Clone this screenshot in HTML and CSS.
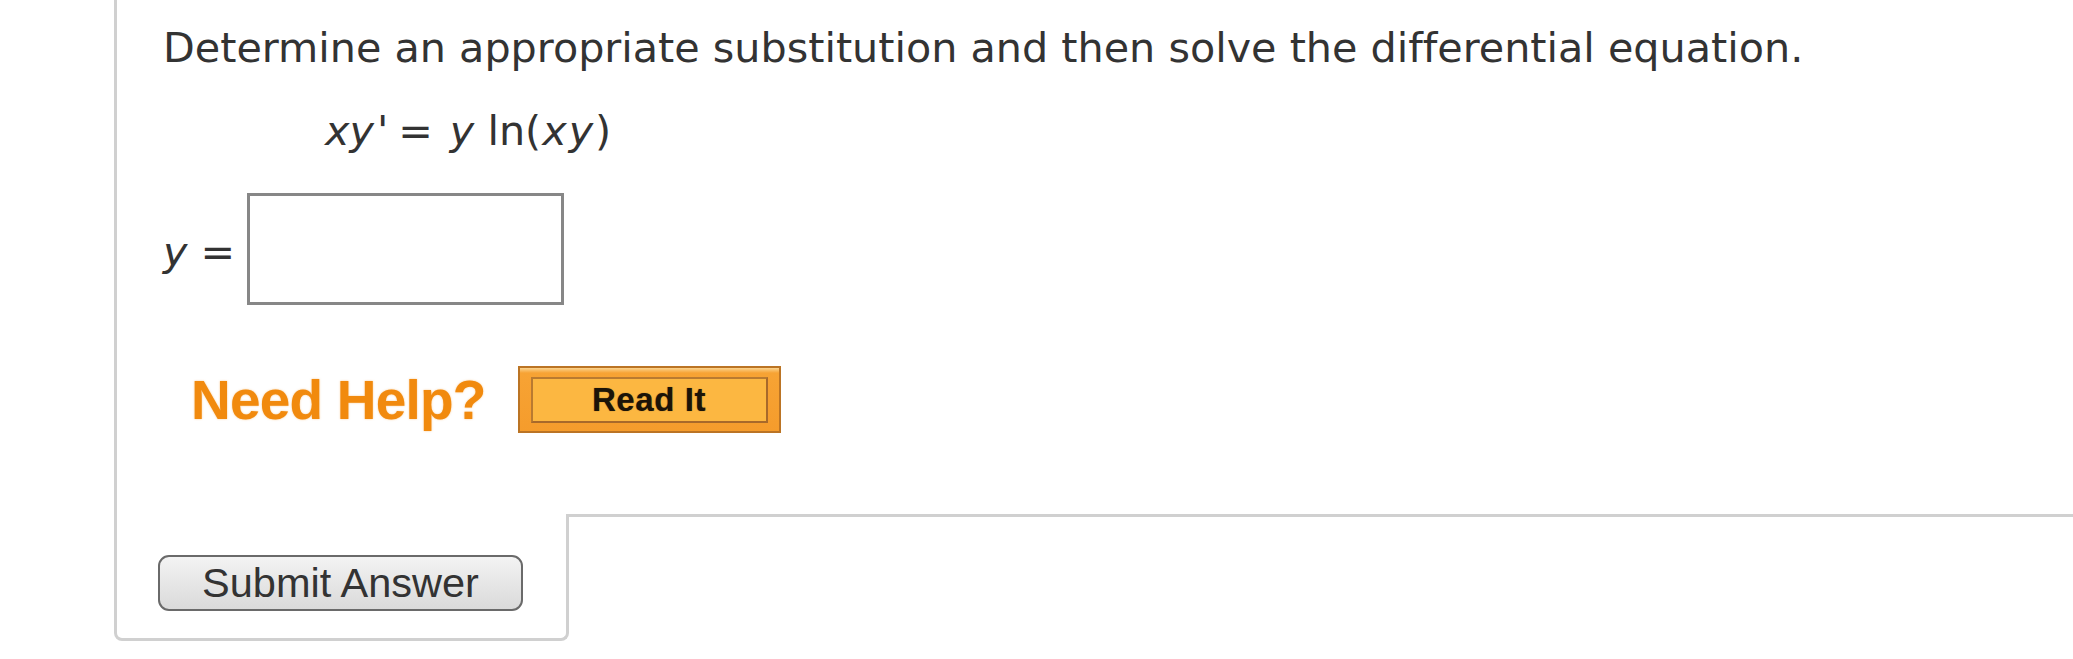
FILE: index.html
```html
<!DOCTYPE html>
<html lang="en">
<head>
<meta charset="utf-8">
<title>Question</title>
<link rel="stylesheet" href="styles.css">
</head>
<body>
<div class="panel">
  <div class="question">
    <p class="prompt">Determine an appropriate substitution and then solve the differential equation.</p>
    <div class="equation"><i>xy</i><span class="prime">'</span><span class="eq">=</span><i>y</i> ln(<i class="arg">xy</i>)</div>
    <div class="answer-row">
      <span class="answer-label"><i>y</i> =</span>
      <input class="answer-box" type="text" aria-label="y">
    </div>
    <div class="help-row">
      <span class="need-help">Need Help?</span>
      <span class="read-it"><span class="read-it-inner">Read It</span></span>
    </div>
  </div>
  <div class="footer">
    <div class="tab">
      <button class="submit" type="button">Submit Answer</button>
    </div>
    <div class="filler"></div>
  </div>
</div>
</body>
</html>
```

FILE: styles.css
```css
html, body {
  margin: 0;
  padding: 0;
  background: #ffffff;
}

body {
  font-family: "DejaVu Sans", Verdana, sans-serif;
  color: #333333;
  font-variant-ligatures: none;
}

.panel {
  margin-left: 114px;
}

.question {
  border-left: 3px solid #d0d0d0;
  padding: 24px 0 81px 46px;
}

.prompt {
  margin: 0;
  font-size: 41.3px;
  line-height: 48px;
  white-space: nowrap;
}

.equation {
  margin: 35px 0 0 162px;
  font-size: 41.3px;
  line-height: 48px;
  white-space: nowrap;
}

.equation i,
.answer-label i {
  font-style: italic;
}

.equation .arg {
  letter-spacing: 2px;
  margin-left: 1px;
}

.prime {
  display: inline-block;
  font-style: italic;
  margin-left: 3px;
}

.eq {
  display: inline-block;
  margin: 0 17px 0 10px;
}

.answer-row {
  margin-top: 38px;
  display: flex;
  align-items: center;
}

.answer-label {
  font-size: 41.3px;
  line-height: 48px;
  padding-top: 6px;
  white-space: pre;
}

.answer-box {
  box-sizing: border-box;
  width: 317px;
  height: 112px;
  margin: 0 0 0 12px;
  border: 3px solid #878787;
  background: #ffffff;
  padding: 0;
  outline: none;
}

.help-row {
  margin-top: 61px;
  padding-left: 28px;
  display: flex;
  align-items: center;
  gap: 32px;
}

.need-help {
  font-family: "Liberation Sans", Arial, sans-serif;
  font-weight: bold;
  font-size: 55px;
  letter-spacing: -0.8px;
  color: #f18a0e;
  text-shadow: 0 0 2px rgba(241, 138, 14, 0.5);
  line-height: 60px;
}

.read-it {
  box-sizing: border-box;
  width: 263px;
  height: 67px;
  border: 2px solid #bb7424;
  background: linear-gradient(#fbd38e 0, #f7a334 5px, #f59c2c 100%);
  padding: 9px 11px 8px 11px;
  display: flex;
}

.read-it-inner {
  flex: 1;
  border: 2px solid #b97a30;
  border-right-color: #a8692a;
  border-bottom-color: #a8692a;
  background: #fcb741;
  display: flex;
  align-items: center;
  justify-content: center;
  font-family: "Liberation Sans", Arial, sans-serif;
  font-weight: bold;
  font-size: 33px;
  color: #1b1408;
  text-shadow: 0 0 1px rgba(0, 0, 0, 0.5);
  letter-spacing: 0.6px;
}

.footer {
  display: flex;
}

.tab {
  box-sizing: border-box;
  width: 455px;
  border-left: 3px solid #d0d0d0;
  border-right: 3px solid #d0d0d0;
  border-bottom: 3px solid #d0d0d0;
  border-radius: 0 0 8px 8px;
  padding: 41px 0 27px 41px;
}

.submit {
  box-sizing: border-box;
  width: 365px;
  height: 56px;
  border: 2px solid #6a6a6a;
  border-radius: 11px;
  background: linear-gradient(#f3f3f3, #dadada);
  font-family: "Liberation Sans", Arial, sans-serif;
  font-size: 41.5px;
  color: #333333;
  padding: 0;
  line-height: 50px;
  display: block;
}

.filler {
  flex: 1;
  border-top: 3px solid #d0d0d0;
}
```
